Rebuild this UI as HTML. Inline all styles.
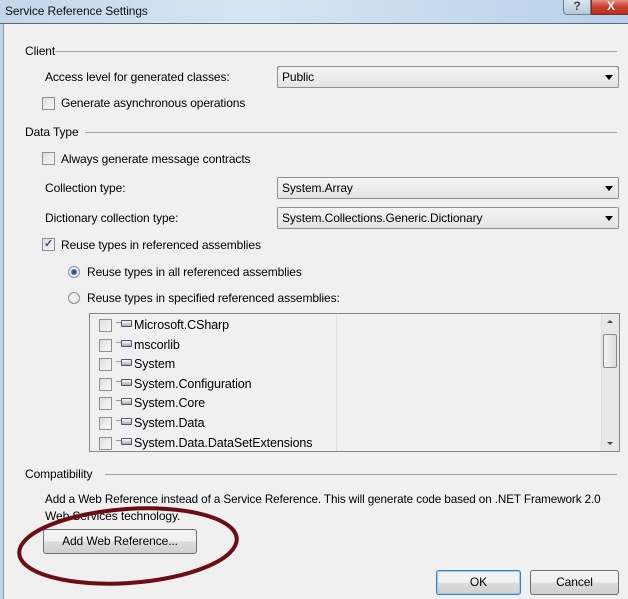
<!DOCTYPE html>
<html><head><style>
*{margin:0;padding:0;box-sizing:border-box}
body{width:628px;height:599px;overflow:hidden;background:#f0f0f0;font-family:"Liberation Sans",sans-serif;font-size:12px;letter-spacing:-0.1px;color:#000;position:relative}
.a{position:absolute;white-space:nowrap}
.title{left:0;top:0;width:628px;height:24px;background:linear-gradient(90deg,#c4d7ea,#d6e5f3 40%,#b9d0e8);border-bottom:1px solid #5a6b7e}
.frame{left:0;top:24px;width:4px;height:575px;background:#bdd2e8;border-right:1px solid #8a9bb0}
.hr{height:1px;background:#a0a0a0}
.combo{height:22px;border:1px solid #8e8f8f;border-radius:2px;background:linear-gradient(#f5f5f5,#e3e3e3);padding:3px 4px}
.combo:after{content:"";position:absolute;right:5px;top:8px;border-left:4px solid transparent;border-right:4px solid transparent;border-top:5px solid #000}
.cb{width:13px;height:13px;border:1px solid #8e8f8f;background:linear-gradient(135deg,#ddd,#fafafa)}
.rb{width:12px;height:12px;border:1px solid #8e8f8f;border-radius:50%;background:#eee}
.btn{height:25px;border:1px solid #707070;border-radius:3px;background:linear-gradient(#f2f2f2 50%,#dddddd 50%,#cfcfcf);text-align:center;line-height:23px}
.li{height:19.6px;left:99px}
.li .cb{position:absolute;left:0;top:3px}
.li .ic{position:absolute;left:17px;top:6px;width:5px;height:1px;background:#999}
.li .fd{position:absolute;left:22px;top:4px;width:11px;height:7px;border:1px solid #556;border-radius:1px;background:linear-gradient(#fff,#aab)}
.li span{position:absolute;left:35px;top:2px;font-size:12.5px}
</style></head><body>
<div class="a title"><span class="a" style="left:5px;top:4px;font-size:12px;color:#111">Service Reference Settings</span>
<div class="a" style="left:563px;top:-2px;width:28px;height:17px;border:1px solid #6e7f94;border-radius:0 0 0 4px;background:linear-gradient(#dfe8f2,#b8c8da);text-align:center;font-size:12px;color:#445;font-weight:bold">?</div>
<div class="a" style="left:591px;top:-2px;width:40px;height:17px;border:1px solid #6e3030;background:linear-gradient(#e8a090,#c84030 50%,#b83020);text-align:center;color:#fff;font-weight:bold">X</div></div>
<div class="a frame"></div>

<span class="a" style="left:25px;top:44px">Client</span><div class="a hr" style="left:55px;top:51px;width:562px"></div>
<span class="a" style="left:45px;top:70px">Access level for generated classes:</span>
<div class="a combo" style="left:277px;top:66px;width:342px">Public</div>
<div class="a cb" style="left:42px;top:97px"></div><span class="a" style="left:61px;top:96px">Generate asynchronous operations</span>

<span class="a" style="left:25px;top:125px">Data Type</span><div class="a hr" style="left:85px;top:132px;width:532px"></div>
<div class="a cb" style="left:42px;top:152px"></div><span class="a" style="left:61px;top:152px">Always generate message contracts</span>
<span class="a" style="left:45px;top:181px">Collection type:</span>
<div class="a combo" style="left:277px;top:177px;width:342px">System.Array</div>
<span class="a" style="left:45px;top:211px">Dictionary collection type:</span>
<div class="a combo" style="left:277px;top:207px;width:342px">System.Collections.Generic.Dictionary</div>
<div class="a cb" style="left:42px;top:238px;text-align:center;line-height:10px;font-size:11px;color:#2a4c8a;font-weight:bold">✓</div><span class="a" style="left:61px;top:238px">Reuse types in referenced assemblies</span>
<div class="a rb" style="left:68px;top:266px;background:radial-gradient(circle,#1b5fa8 35%,#eee 45%)"></div><span class="a" style="left:87px;top:265px">Reuse types in all referenced assemblies</span>
<div class="a rb" style="left:68px;top:292px"></div><span class="a" style="left:87px;top:291px">Reuse types in specified referenced assemblies:</span>

<div class="a" style="left:89px;top:313px;width:531px;height:139px;border:1px solid #828790;background:#f0f0f0">
<div class="a" style="left:246px;top:0;width:1px;height:137px;background:#e0e0e0"></div>
<div class="a" style="left:511px;top:0;width:18px;height:137px;background:#e8e8e8;border-left:1px solid #ddd">
<div class="a" style="left:5px;top:6px;border-left:3px solid transparent;border-right:3px solid transparent;border-bottom:3px solid #444"></div>
<div class="a" style="left:1px;top:20px;width:14px;height:34px;border:1px solid #888;border-radius:2px;background:linear-gradient(90deg,#f5f5f5,#ddd)"></div>
<div class="a" style="left:5px;top:128px;border-left:3px solid transparent;border-right:3px solid transparent;border-top:3px solid #444"></div>
</div></div>
<div class="a li" style="top:316px"><div class="a cb"></div><div class="a ic"></div><div class="a fd"></div><span>Microsoft.CSharp</span></div>
<div class="a li" style="top:335.6px"><div class="a cb"></div><div class="a ic"></div><div class="a fd"></div><span>mscorlib</span></div>
<div class="a li" style="top:355.2px"><div class="a cb"></div><div class="a ic"></div><div class="a fd"></div><span>System</span></div>
<div class="a li" style="top:374.8px"><div class="a cb"></div><div class="a ic"></div><div class="a fd"></div><span>System.Configuration</span></div>
<div class="a li" style="top:394.4px"><div class="a cb"></div><div class="a ic"></div><div class="a fd"></div><span>System.Core</span></div>
<div class="a li" style="top:414px"><div class="a cb"></div><div class="a ic"></div><div class="a fd"></div><span>System.Data</span></div>
<div class="a li" style="top:433.6px"><div class="a cb"></div><div class="a ic"></div><div class="a fd"></div><span>System.Data.DataSetExtensions</span></div>

<span class="a" style="left:25px;top:467px">Compatibility</span><div class="a hr" style="left:105px;top:474px;width:512px"></div>
<span class="a" style="left:45px;top:493px;font-size:11.7px">Add a Web Reference instead of a Service Reference. This will generate code based on .NET Framework 2.0</span>
<span class="a" style="left:45px;top:509px">Web Services technology.</span>
<div class="a btn" style="left:43px;top:529px;width:154px">Add Web Reference...</div>
<div class="a btn" style="left:436px;top:570px;width:85px;border-color:#3c7fb1;box-shadow:inset 0 0 0 1px #8ed0f0">OK</div>
<div class="a btn" style="left:530px;top:570px;width:89px">Cancel</div>
<svg class="a" style="left:0;top:0" width="628" height="599"><ellipse cx="128" cy="546" rx="109" ry="37" transform="rotate(-4 128 546)" fill="none" stroke="#6e0c14" stroke-width="4"/></svg>
</body></html>
